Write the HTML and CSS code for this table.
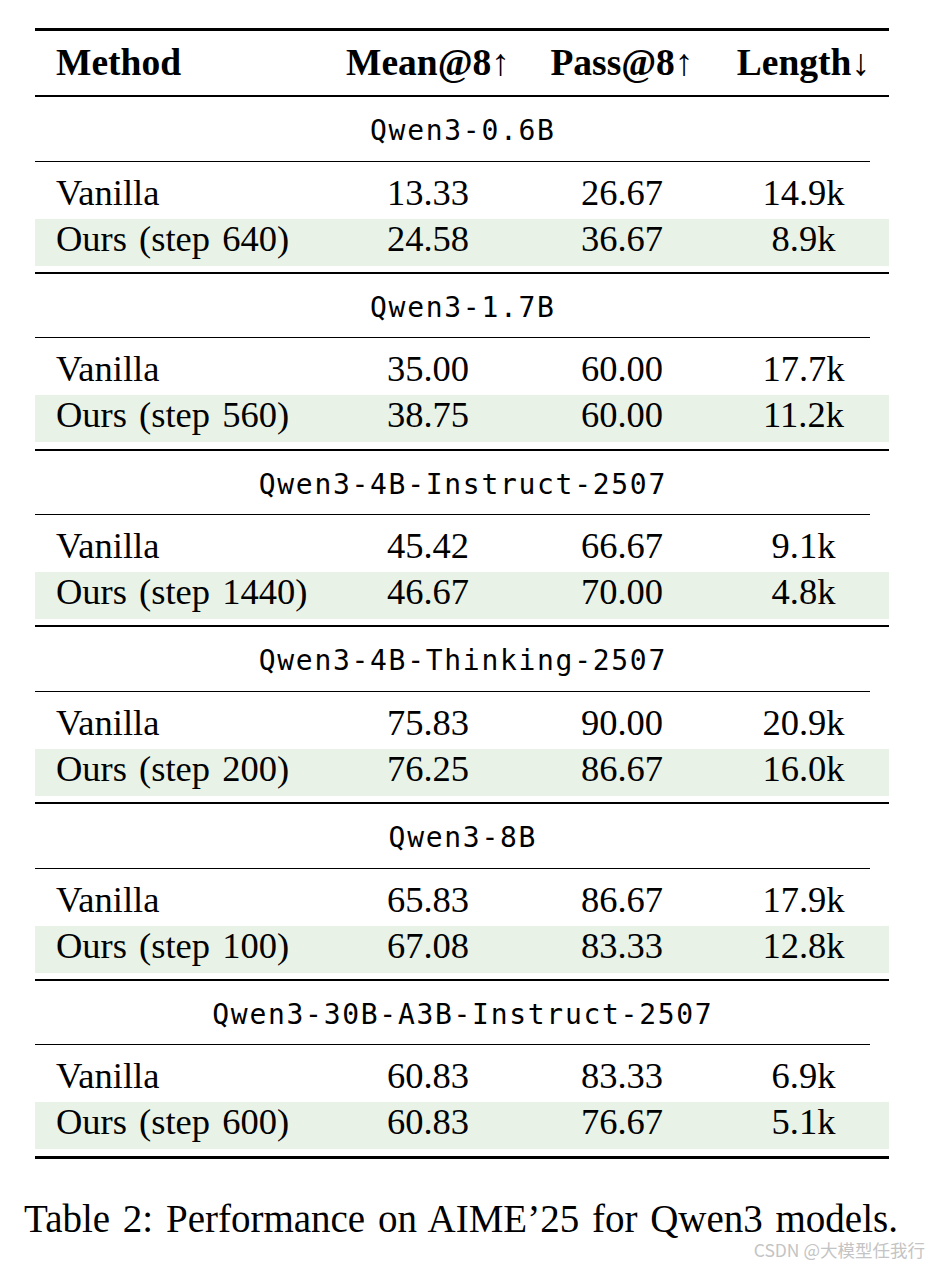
FILE: index.html
```html
<!DOCTYPE html>
<html lang="en">
<head>
<meta charset="utf-8">
<title>Table 2</title>
<link rel="stylesheet" href="styles.css">
</head>
<body>
<div class="page">
  <div class="table">
    <div class="rule-top"></div>
    <div class="row head">
      <div class="c1">Method</div>
      <div class="cn">Mean@8↑</div>
      <div class="cn">Pass@8↑</div>
      <div class="cn">Length↓</div>
    </div>

    <div class="rule-mid"></div>
    <div class="label">Qwen3-0.6B</div>
    <div class="cmid"></div>
    <div class="row van"><div class="c1">Vanilla</div><div class="cn">13.33</div><div class="cn">26.67</div><div class="cn">14.9k</div></div>
    <div class="row ours"><div class="c1">Ours (step 640)</div><div class="cn">24.58</div><div class="cn">36.67</div><div class="cn">8.9k</div></div>
    <div class="gap"></div>

    <div class="rule-mid"></div>
    <div class="label">Qwen3-1.7B</div>
    <div class="cmid"></div>
    <div class="row van"><div class="c1">Vanilla</div><div class="cn">35.00</div><div class="cn">60.00</div><div class="cn">17.7k</div></div>
    <div class="row ours"><div class="c1">Ours (step 560)</div><div class="cn">38.75</div><div class="cn">60.00</div><div class="cn">11.2k</div></div>
    <div class="gap"></div>

    <div class="rule-mid"></div>
    <div class="label">Qwen3-4B-Instruct-2507</div>
    <div class="cmid"></div>
    <div class="row van"><div class="c1">Vanilla</div><div class="cn">45.42</div><div class="cn">66.67</div><div class="cn">9.1k</div></div>
    <div class="row ours"><div class="c1">Ours (step 1440)</div><div class="cn">46.67</div><div class="cn">70.00</div><div class="cn">4.8k</div></div>
    <div class="gap"></div>

    <div class="rule-mid"></div>
    <div class="label">Qwen3-4B-Thinking-2507</div>
    <div class="cmid"></div>
    <div class="row van"><div class="c1">Vanilla</div><div class="cn">75.83</div><div class="cn">90.00</div><div class="cn">20.9k</div></div>
    <div class="row ours"><div class="c1">Ours (step 200)</div><div class="cn">76.25</div><div class="cn">86.67</div><div class="cn">16.0k</div></div>
    <div class="gap"></div>

    <div class="rule-mid"></div>
    <div class="label">Qwen3-8B</div>
    <div class="cmid"></div>
    <div class="row van"><div class="c1">Vanilla</div><div class="cn">65.83</div><div class="cn">86.67</div><div class="cn">17.9k</div></div>
    <div class="row ours"><div class="c1">Ours (step 100)</div><div class="cn">67.08</div><div class="cn">83.33</div><div class="cn">12.8k</div></div>
    <div class="gap"></div>

    <div class="rule-mid"></div>
    <div class="label">Qwen3-30B-A3B-Instruct-2507</div>
    <div class="cmid"></div>
    <div class="row van"><div class="c1">Vanilla</div><div class="cn">60.83</div><div class="cn">83.33</div><div class="cn">6.9k</div></div>
    <div class="row ours"><div class="c1">Ours (step 600)</div><div class="cn">60.83</div><div class="cn">76.67</div><div class="cn">5.1k</div></div>
    <div class="gap"></div>
    <div class="rule-bot"></div>
  </div>
  <div class="caption">Table 2: Performance on AIME’25 for Qwen3 models.</div>
  <div class="watermark">CSDN @大模型任我行</div>
</div>
</body>
</html>
```

FILE: styles.css
```css
html, body {
  margin: 0;
  padding: 0;
  background: #ffffff;
}

.page {
  position: relative;
  width: 930px;
  height: 1263px;
  overflow: hidden;
  font-family: "Liberation Serif", "Times New Roman", serif;
  color: #000;
}

.table {
  margin: 28px 0 0 35px;
  width: 854px;
  display: flex;
  flex-direction: column;
}

.rule-top { height: 3px; background: #000; }
.rule-mid { height: 2px; background: #000; }
.rule-bot { height: 3px; background: #000; }
.cmid { height: 1px; background: #000; margin-right: 19px; }
.gap { height: 6.3px; }

.row {
  display: grid;
  grid-template-columns: 295px 196px 192px 171px;
  font-size: 36.5px;
  word-spacing: 3px;
  white-space: nowrap;
}

.row .c1 { padding-left: 21px; }
.row .cn { text-align: center; }

.head {
  height: 64px;
  line-height: 64px;
  font-weight: bold;
  font-size: 37.5px;
}

.van {
  height: 57px;
  box-sizing: border-box;
  padding-top: 5px;
  line-height: 52px;
}

.ours {
  height: 47px;
  box-sizing: border-box;
  padding-bottom: 7px;
  line-height: 40px;
  background: #e8f2e6;
}

.label {
  height: 63.5px;
  box-sizing: border-box;
  padding-top: 17px;
  line-height: 34px;
  text-align: center;
  font-family: "DejaVu Sans Mono", monospace;
  font-size: 28px;
  letter-spacing: 1.7px;
  text-indent: 1.7px;
}

.caption {
  margin-top: 38px;
  text-align: center;
  font-size: 39px;
  word-spacing: 3px;
  line-height: 44px;
  padding-right: 8px;
  white-space: nowrap;
}

.watermark {
  position: absolute;
  right: 5px;
  bottom: 3px;
  font-family: "Noto Sans CJK SC", "Noto Sans", sans-serif;
  font-size: 17.5px;
  color: #c4c4c4;
  line-height: 20px;
}
```
